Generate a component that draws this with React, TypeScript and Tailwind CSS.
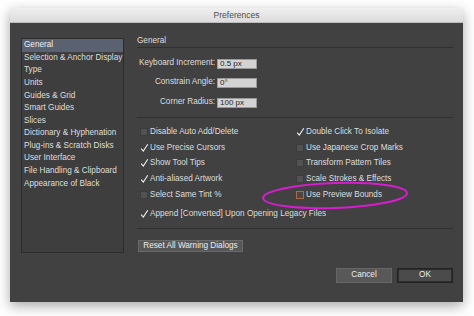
import React from "react";

const font = { fontFamily: '"Liberation Sans", Arial, sans-serif' };

function Check({ checked, focus }: { checked?: boolean; focus?: boolean }) {
  return (
    <span
      className={`relative inline-block w-[8px] h-[8px] shrink-0 border ${
        focus
          ? "border-[#a86b45] bg-[#4c4643]"
          : checked
          ? "border-transparent bg-transparent"
          : "border-[#3c3c3c] bg-[#525252]"
      }`}
    >
      {checked && (
        <svg
          className="absolute left-[-1px] top-[-2px]"
          width="9"
          height="10"
          viewBox="0 0 9 10"
        >
          <path d="M1.2 5.6 L3.3 8 L7.8 1.2" fill="none" stroke="#f0f0f0" strokeWidth="1.1" />
        </svg>
      )}
    </span>
  );
}

function CbRow({ label, checked, focus }: { label: string; checked?: boolean; focus?: boolean }) {
  return (
    <div className="flex items-center h-full gap-[2px]">
      <Check checked={checked} focus={focus} />
      <span className="whitespace-nowrap">{label}</span>
    </div>
  );
}

export default function App() {
  const items = [
    "General",
    "Selection & Anchor Display",
    "Type",
    "Units",
    "Guides & Grid",
    "Smart Guides",
    "Slices",
    "Dictionary & Hyphenation",
    "Plug-ins & Scratch Disks",
    "User Interface",
    "File Handling & Clipboard",
    "Appearance of Black",
  ];
  const rows: [string, boolean, string, boolean, boolean?][] = [
    ["Disable Auto Add/Delete", false, "Double Click To Isolate", true],
    ["Use Precise Cursors", true, "Use Japanese Crop Marks", false],
    ["Show Tool Tips", true, "Transform Pattern Tiles", false],
    ["Anti-aliased Artwork", true, "Scale Strokes & Effects", false],
    ["Select Same Tint %", false, "Use Preview Bounds", false, true],
  ];
  return (
    <div
      className="relative w-[474px] h-[316px] bg-white overflow-hidden text-[8.2px] text-[#dedede]"
      style={font}
    >
      <div className="pl-[10px] pt-[8px]">
        <div className="w-[453px] h-[294px] flex flex-col shadow-[0_4px_12px_rgba(0,0,0,0.35)]">
          <div className="h-[15px] shrink-0 flex items-center justify-center bg-gradient-to-b from-[#efefef] to-[#dcdcdc] border-b border-[#bdbdbd] text-[#4d4d4d] text-[8.5px]">
            Preferences
          </div>
          <div className="flex-1 bg-[#414141] flex pl-[11px] pr-[10px] pt-[13px]">
            <div className="mt-[2px] w-[103px] h-[215px] border border-[#2c2c2c] bg-[#3e3e3e] flex flex-col">
              {items.map((it, i) => (
                <div
                  key={it}
                  className={`h-[12.6px] shrink-0 flex items-center pl-[2px] whitespace-nowrap ${
                    i === 0 ? "bg-[#5a6271] text-[#f0f0f0]" : ""
                  }`}
                >
                  {it}
                </div>
              ))}
            </div>
            <div className="ml-[13px] flex-1 flex flex-col">
              <div className="h-[12px] flex items-center border-b border-[#303030]">General</div>
              <div className="mt-[10px] flex flex-col">
                {[
                  ["Keyboard Increment:", "0.5 px", "mt-[0px]"],
                  ["Constrain Angle:", "0°", "mt-[8px]"],
                  ["Corner Radius:", "100 px", "mt-[9px]"],
                ].map(([l, v, m]) => (
                  <div key={l} className={`flex items-center h-[11px] ${m}`}>
                    <span className="w-[78px] text-right whitespace-nowrap">{l}</span>
                    <span className="ml-[2px] w-[40px] h-[10px] bg-[#d3d3d3] border border-[#9a9a9a] text-[#1e1e1e] flex items-center pl-[2px] text-[8px]">
                      {v}
                    </span>
                  </div>
                ))}
              </div>
              <div className="mt-[9px] border-t border-[#303030]" />
              <div className="mt-[6px] flex flex-col pl-[3px]">
                {rows.map(([a, ac, b, bc, bf]) => (
                  <div key={a} className="h-[15.8px] grid grid-cols-[156px_1fr]">
                    <CbRow label={a} checked={ac} />
                    <CbRow label={b} checked={bc} focus={bf} />
                  </div>
                ))}
                <div className="mt-[3px] h-[16px]">
                  <CbRow label="Append [Converted] Upon Opening Legacy Files" checked />
                </div>
              </div>
              <div className="mt-[6px] border-t border-[#303030]" />
              <div className="mt-[11px] pl-[1px]">
                <div className="w-[105px] h-[12px] bg-[#575757] border border-[#6a6a6a] flex items-center justify-center whitespace-nowrap text-[#ececec]">
                  Reset All Warning Dialogs
                </div>
              </div>
              <div className="mt-[16px] flex justify-end gap-[5px]">
                <div className="w-[56px] h-[15px] bg-[#585858] border border-[#666] flex items-center justify-center text-[#ececec]">
                  Cancel
                </div>
                <div className="w-[56px] h-[15px] bg-[#4b4b4b] border border-[#222] shadow-[inset_0_0_0_1px_#2e2e2e] flex items-center justify-center text-[#ececec]">
                  OK
                </div>
              </div>
            </div>
          </div>
        </div>
      </div>
      <svg className="absolute left-0 top-0 pointer-events-none" width="474" height="316">
        <ellipse
          cx="335"
          cy="195.5"
          rx="72"
          ry="12.5"
          fill="none"
          stroke="#d81ccf"
          strokeWidth="2"
          transform="rotate(-2 335 195.5)"
        />
      </svg>
    </div>
  );
}
